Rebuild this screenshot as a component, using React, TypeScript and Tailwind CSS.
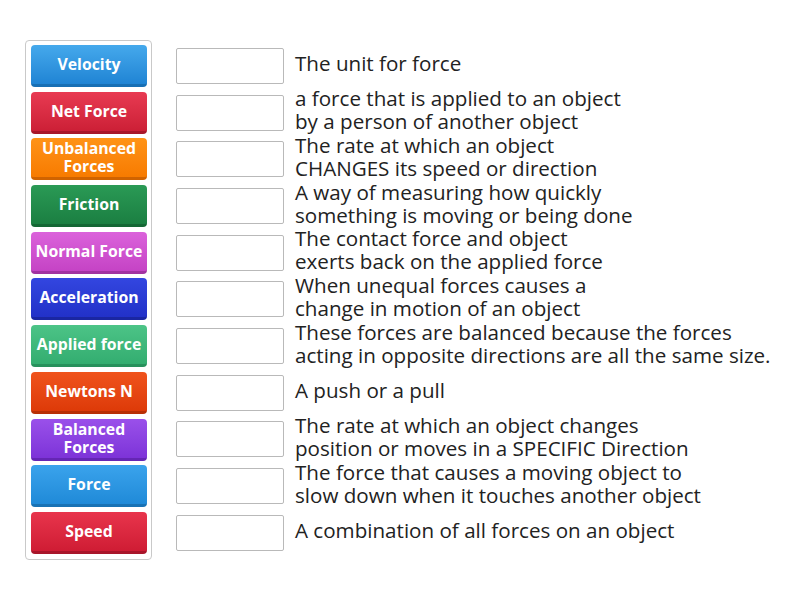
import React from 'react'

const terms = [
  { label: ['Velocity'], cls: 'from-[#45a9ec] to-[#1f84d4] border-b-[#176fb4]' },
  { label: ['Net Force'], cls: 'from-[#e83a52] to-[#cc1f36] border-b-[#a8162a]' },
  { label: ['Unbalanced', 'Forces'], cls: 'from-[#ff9317] to-[#f77b00] border-b-[#d06300]' },
  { label: ['Friction'], cls: 'from-[#2a9a55] to-[#1b7f42] border-b-[#146734]' },
  { label: ['Normal Force'], cls: 'from-[#db62db] to-[#c543c5] border-b-[#a232a2]' },
  { label: ['Acceleration'], cls: 'from-[#3346e0] to-[#2231c8] border-b-[#1a26a2]' },
  { label: ['Applied force'], cls: 'from-[#4cc487] to-[#33ad70] border-b-[#27915c]' },
  { label: ['Newtons N'], cls: 'from-[#f0531c] to-[#dd3a08] border-b-[#b82f05]' },
  { label: ['Balanced', 'Forces'], cls: 'from-[#9a50ea] to-[#7d33d8] border-b-[#6526b4]' },
  { label: ['Force'], cls: 'from-[#3aa3ec] to-[#1f8ad8] border-b-[#1872b4]' },
  { label: ['Speed'], cls: 'from-[#e8344c] to-[#cf1c34] border-b-[#a8152a]' },
]

const definitions = [
  ['The unit for force'],
  ['a force that is applied to an object', 'by a person of another object'],
  ['The rate at which an object', 'CHANGES its speed or direction'],
  ['A way of measuring how quickly', 'something is moving or being done'],
  ['The contact force and object', 'exerts back on the applied force'],
  ['When unequal forces causes a', 'change in motion of an object'],
  ['These forces are balanced because the forces', 'acting in opposite directions are all the same size.'],
  ['A push or a pull'],
  ['The rate at which an object changes', 'position or moves in a SPECIFIC Direction'],
  ['The force that causes a moving object to', 'slow down when it touches another object'],
  ['A combination of all forces on an object'],
]

export default function App() {
  return (
    <div className="flex h-[600px] w-[800px] items-start bg-white pl-[25px] pt-[40px] font-['Open_Sans',sans-serif]">
      <div className="flex w-[127px] flex-col gap-[4.7px] rounded-[4px] border border-[#c9c9c9] pb-[5px] pl-[5px] pr-[4px] pt-[4px]">
        {terms.map(term => (
          <div
            key={term.label.join(' ')}
            className={`flex h-[42px] w-[116px] flex-col items-center justify-center rounded-[4px] border-b-[3px] bg-linear-to-b pb-[1px] text-center text-[15.8px] font-bold leading-[18px] text-white ${term.cls}`}
          >
            {term.label.map(line => (
              <span key={line} className="whitespace-nowrap">{line}</span>
            ))}
          </div>
        ))}
      </div>

      <div className="ml-[24px] mt-[2.65px] flex flex-col">
        {definitions.map(lines => (
          <div key={lines[0]} className="flex h-[46.7px] items-center">
            <div className="h-[36px] w-[108px] shrink-0 rounded-[2px] border border-[#b9b9b9] bg-white" />
            <div className="ml-[11px] flex flex-col pb-[5px] text-[20.6px] leading-[23px] text-[#222222]">
              {lines.map(line => (
                <span key={line} className="whitespace-nowrap">{line}</span>
              ))}
            </div>
          </div>
        ))}
      </div>
    </div>
  )
}
